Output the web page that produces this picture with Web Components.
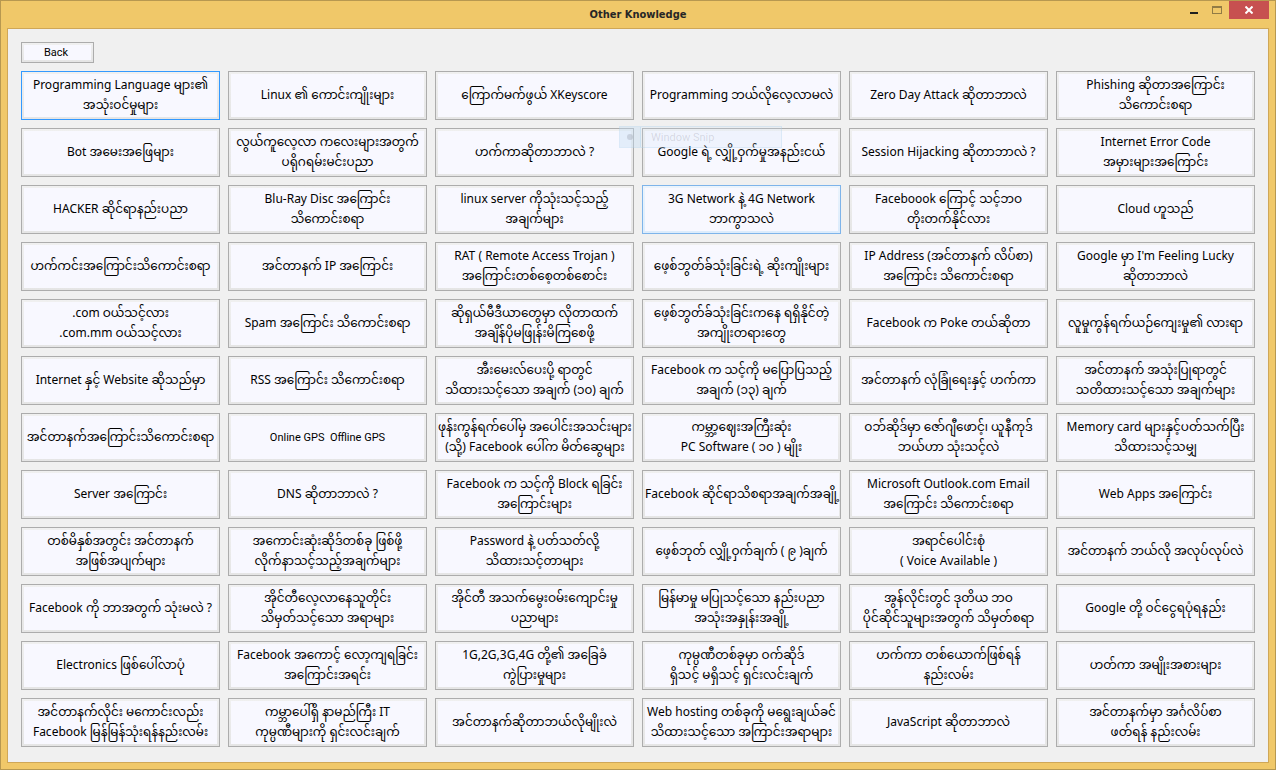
<!DOCTYPE html>
<html lang="my">
<head>
<meta charset="utf-8">
<title>Other Knowledge</title>
<style>
    body {
        margin: 0;
        font-family: "Noto Sans", "Noto Sans Myanmar", "Padauk", sans-serif;
        font-size: 12px;
        color: #000;
    }
</style>
</head>
<body>
<app-window caption="Other Knowledge">
    <push-button class="back" plain>Back</push-button>
    <topic-grid></topic-grid>
    <snip-hint slot="overlay">Window Snip</snip-hint>
</app-window>

<script>
(function() {
    function attach(el, html) {
        let tmpl = document.createElement('template');
        tmpl.innerHTML = html;
        let root = el.attachShadow({ mode: 'open' });
        root.appendChild(tmpl.content.cloneNode(true));
        return root;
    }

    // one entry per button, row by row, \n is a line break
    const TOPICS = [
        'Programming Language များ၏\nအသုံးဝင်မှုများ',
        'Linux ၏ ကောင်းကျိုးများ',
        'ကြောက်မက်ဖွယ် XKeyscore',
        'Programming ဘယ်လိုလေ့လာမလဲ',
        'Zero Day Attack ဆိုတာဘာလဲ',
        'Phishing ဆိုတာအကြောင်း\nသိကောင်းစရာ',

        'Bot အမေးအဖြေများ',
        'လွယ်ကူလေ့လာ ကလေးများအတွက်\nပရိုဂရမ်းမင်းပညာ',
        'ဟက်ကာဆိုတာဘာလဲ ?',
        'Google ရဲ့ လျှို့ဝှက်မှုအနည်းငယ်',
        'Session Hijacking ဆိုတာဘာလဲ ?',
        'Internet Error Code\nအမှားများအကြောင်း',

        'HACKER ဆိုင်ရာနည်းပညာ',
        'Blu-Ray Disc အကြောင်း\nသိကောင်းစရာ',
        'linux server ကိုသုံးသင့်သည့်\nအချက်များ',
        '3G Network နဲ့ 4G Network\nဘာကွာသလဲ',
        'Faceboook ကြောင့် သင့်ဘဝ\nတိုးတက်နိုင်လား',
        'Cloud ဟူသည်',

        'ဟက်ကင်းအကြောင်းသိကောင်းစရာ',
        'အင်တာနက် IP အကြောင်း',
        'RAT ( Remote Access Trojan )\nအကြောင်းတစ်စေ့တစ်စောင်း',
        'ဖေ့စ်ဘွတ်ခ်သုံးခြင်းရဲ့ ဆိုးကျိုးများ',
        'IP Address (အင်တာနက် လိပ်စာ)\nအကြောင်း သိကောင်းစရာ',
        'Google မှာ I\'m Feeling Lucky\nဆိုတာဘာလဲ',

        '.com ဝယ်သင့်လား\n.com.mm ဝယ်သင့်လား',
        'Spam အကြောင်း သိကောင်းစရာ',
        'ဆိုရှယ်မီဒီယာတွေမှာ လိုတာထက်\nအချိန်ပိုမဖြုန်းမိကြစေဖို့',
        'ဖေ့စ်ဘွတ်ခ်သုံးခြင်းကနေ ရရှိနိုင်တဲ့\nအကျိုးတရားတွေ',
        'Facebook က Poke တယ်ဆိုတာ',
        'လူမှုကွန်ရက်ယဉ်ကျေးမှု၏ လားရာ',

        'Internet နှင့် Website ဆိုသည်မှာ',
        'RSS အကြောင်း သိကောင်းစရာ',
        'အီးမေးလ်ပေးပို့ ရာတွင်\nသိထားသင့်သော အချက် (၁၀) ချက်',
        'Facebook က သင့်ကို မပြောပြသည့်\nအချက် (၁၃) ချက်',
        'အင်တာနက် လုံခြုံရေးနှင့် ဟက်ကာ',
        'အင်တာနက် အသုံးပြုရာတွင်\nသတိထားသင့်သော အချက်များ',

        'အင်တာနက်အကြောင်းသိကောင်းစရာ',
        'Online GPS  Offline GPS',
        'ဖုန်းကွန်ရက်ပေါ်မှ အပေါင်းအသင်းများ\n(သို့) Facebook ပေါ်က မိတ်ဆွေများ',
        'ကမ္ဘာ့ဈေးအကြီးဆုံး\nPC Software ( ၁၀ ) မျိုး',
        'ဝဘ်ဆိုဒ်မှာ ဇော်ဂျီဖောင့်၊ ယူနီကုဒ်\nဘယ်ဟာ သုံးသင့်လဲ',
        'Memory card များနှင့်ပတ်သက်ပြီး\nသိထားသင့်သမျှ',

        'Server အကြောင်း',
        'DNS ဆိုတာဘာလဲ ?',
        'Facebook က သင့်ကို Block ရခြင်း\nအကြောင်းများ',
        'Facebook ဆိုင်ရာသိစရာအချက်အချို့',
        'Microsoft Outlook.com Email\nအကြောင်း သိကောင်းစရာ',
        'Web Apps အကြောင်း',

        'တစ်မိနှစ်အတွင်း အင်တာနက်\nအဖြစ်အပျက်များ',
        'အကောင်းဆုံးဆိုဒ်တစ်ခု ဖြစ်ဖို့\nလိုက်နာသင့်သည့်အချက်များ',
        'Password နဲ့ ပတ်သတ်လို့\nသိထားသင့်တာများ',
        'ဖေ့စ်ဘုတ် လျှို့ဝှက်ချက် ( ၉ )ချက်',
        'အရာင်ပေါင်းစုံ\n( Voice Available )',
        'အင်တာနက် ဘယ်လို အလုပ်လုပ်လဲ',

        'Facebook ကို ဘာအတွက် သုံးမလဲ ?',
        'အိုင်တီလေ့လာနေသူတိုင်း\nသိမှတ်သင့်သော အရာများ',
        'အိုင်တီ အသက်မွေးဝမ်းကျောင်းမှု\nပညာများ',
        'မြန်မာမှု မပြုသင့်သော နည်းပညာ\nအသုံးအနှုန်းအချို့',
        'အွန်လိုင်းတွင် ဒုတိယ ဘဝ\nပိုင်ဆိုင်သူများအတွက် သိမှတ်စရာ',
        'Google တို့ ဝင်ငွေရပုံရနည်း',

        'Electronics ဖြစ်ပေါ်လာပုံ',
        'Facebook အကောင့် လော့ကျရခြင်း\nအကြောင်းအရင်း',
        '1G,2G,3G,4G တို့၏ အခြေခံ\nကွဲပြားမှုများ',
        'ကုမ္ပဏီတစ်ခုမှာ ဝက်ဆိုဒ်\nရှိသင့် မရှိသင့် ရှင်းလင်းချက်',
        'ဟက်ကာ တစ်ယောက်ဖြစ်ရန်\nနည်းလမ်း',
        'ဟတ်ကာ အမျိုးအစားများ',

        'အင်တာနက်လိုင်း မကောင်းလည်း\nFacebook မြန်မြန်သုံးရန်နည်းလမ်း',
        'ကမ္ဘာပေါ်ရှိ နာမည်ကြီး IT\nကုမ္ပဏီများကို ရှင်းလင်းချက်',
        'အင်တာနက်ဆိုတာဘယ်လိုမျိုးလဲ',
        'Web hosting တစ်ခုကို မရွေးချယ်ခင်\nသိထားသင့်သော အကြာင်းအရာများ',
        'JavaScript ဆိုတာဘာလဲ',
        'အင်တာနက်မှာ အင်္ဂလိပ်စာ\nဖတ်ရန် နည်းလမ်း'
    ];

    class AppWindow extends HTMLElement {
        constructor() {
            super();
            this._shadowRoot = attach(this, `
                <style>
                    :host {
                        display: flex;
                        flex-direction: column;
                        position: relative;
                        box-sizing: border-box;
                        min-height: 100vh;
                        padding: 0 6px 6px;
                        border: 1px solid #b79850;
                        background: #f0c869;
                    }
                    header {
                        display: grid;
                        grid-template-columns: 1fr auto 1fr;
                        height: 27px;
                    }
                    h1 {
                        grid-column: 2;
                        margin: 0;
                        font: bold 11px/27px "DejaVu Sans Condensed", "DejaVu Sans", sans-serif;
                        color: #262626;
                    }
                    nav {
                        display: flex;
                        justify-content: flex-end;
                        align-items: flex-start;
                    }
                    nav button {
                        display: grid;
                        place-items: center;
                        width: 24px;
                        height: 18px;
                        margin: 0;
                        padding: 0;
                        border: 0;
                        background: none;
                    }
                    nav .close {
                        width: 40px;
                        background: #c75050;
                    }
                    main {
                        display: flex;
                        flex-direction: column;
                        align-items: flex-start;
                        flex: 1;
                        gap: 8px;
                        padding: 13px 13px 15px;
                        border: 1px solid #cfa757;
                        background: #f0f0f0;
                    }
                </style>
                <header>
                    <h1></h1>
                    <nav>
                        <button aria-label="Minimize">
                            <svg width="10" height="10"><path d="M2 7h8v2H2z" fill="#1f1f1f"/></svg>
                        </button>
                        <button aria-label="Maximize" disabled>
                            <svg width="10" height="10"><path d="M0 1h10v8H0zM1 3v5h8V3z" fill="#917b45" fill-rule="evenodd"/></svg>
                        </button>
                        <button class="close" aria-label="Close">
                            <svg width="8" height="8"><path d="M.5 .5l7 7M7.500 .5l-7 7" stroke="#fff" stroke-width="2"/></svg>
                        </button>
                    </nav>
                </header>
                <main><slot></slot></main>
                <slot name="overlay"></slot>
            `);
            this._shadowRoot.querySelector('h1').textContent = this.getAttribute('caption');
        }
    }

    class PushButton extends HTMLElement {
        constructor() {
            super();
            this._shadowRoot = attach(this, `
                <style>
                    :host {
                        display: grid;
                        min-height: 49px;
                        --edge: #acacac;
                        --from: #f0f0f0;
                        --to: #e5e5e5;
                    }
                    :host([plain]) {
                        font-family: Roboto, sans-serif;
                        font-size: 11px;
                    }
                    :host(.back) {
                        width: 73px;
                        min-height: 21px;
                    }
                    :host([focused]) { --edge: #3399ff; }
                    :host([hot]) {
                        --edge: #7eb4ea;
                        --from: #ecf4fc;
                        --to: #dcecfc;
                    }
                    button {
                        display: grid;
                        min-width: 0;
                        margin: 0;
                        padding: 2px;
                        border: 1px solid var(--edge);
                        background: linear-gradient(var(--from), var(--to));
                        font: inherit;
                        line-height: 20px;
                        color: inherit;
                    }
                    span {
                        display: grid;
                        place-content: center;
                        padding-bottom: 2px;
                        background: #f8f8ff;
                        text-align: center;
                        white-space: pre;
                    }
                    :host([plain]) span { padding: 0; }
                    :host(.back) button { line-height: 15px; }
                    :host(.back) span { padding-right: 3px; }
                </style>
                <button><span><slot></slot></span></button>
            `);
        }
    }

    class TopicGrid extends HTMLElement {
        constructor() {
            super();
            this._shadowRoot = attach(this, `
                <style>
                    :host {
                        display: grid;
                        grid-template-columns: repeat(6, minmax(0, 1fr));
                        grid-auto-rows: minmax(49px, 1fr);
                        gap: 8px;
                        flex: 1;
                        width: 100%;
                    }
                </style>
            `);
            TOPICS.forEach((text, i) => {
                let button = document.createElement('push-button');
                button.textContent = text;
                if (i === 0) button.setAttribute('focused', '');
                if (i === 15) button.setAttribute('hot', '');
                if (text.startsWith('Online')) button.setAttribute('plain', '');
                this._shadowRoot.appendChild(button);
            });
        }
    }

    // menu entry that is fading out over the window
    class SnipHint extends HTMLElement {
        constructor() {
            super();
            attach(this, `
                <style>
                    :host {
                        position: absolute;
                        left: 618px;
                        top: 125px;
                        display: flex;
                        align-items: center;
                        box-sizing: border-box;
                        width: 163px;
                        height: 22px;
                        border: 1px solid rgba(160, 205, 235, .25);
                        background: rgba(205, 225, 245, .2);
                        font-family: Roboto, sans-serif;
                        font-size: 11px;
                        color: rgba(60, 60, 80, .16);
                        pointer-events: none;
                    }
                    i {
                        display: grid;
                        place-items: center;
                        width: 20px;
                        height: 20px;
                        margin-right: 10px;
                        border-right: 1px solid rgba(160, 205, 235, .3);
                        background: rgba(190, 220, 245, .25);
                    }
                    i::after {
                        content: "";
                        width: 6px;
                        height: 6px;
                        border-radius: 50%;
                        background: rgba(60, 60, 80, .16);
                    }
                </style>
                <i></i><slot></slot>
            `);
        }
    }

    customElements.define('app-window', AppWindow);
    customElements.define('push-button', PushButton);
    customElements.define('topic-grid', TopicGrid);
    customElements.define('snip-hint', SnipHint);
})();
</script>
</body>
</html>
